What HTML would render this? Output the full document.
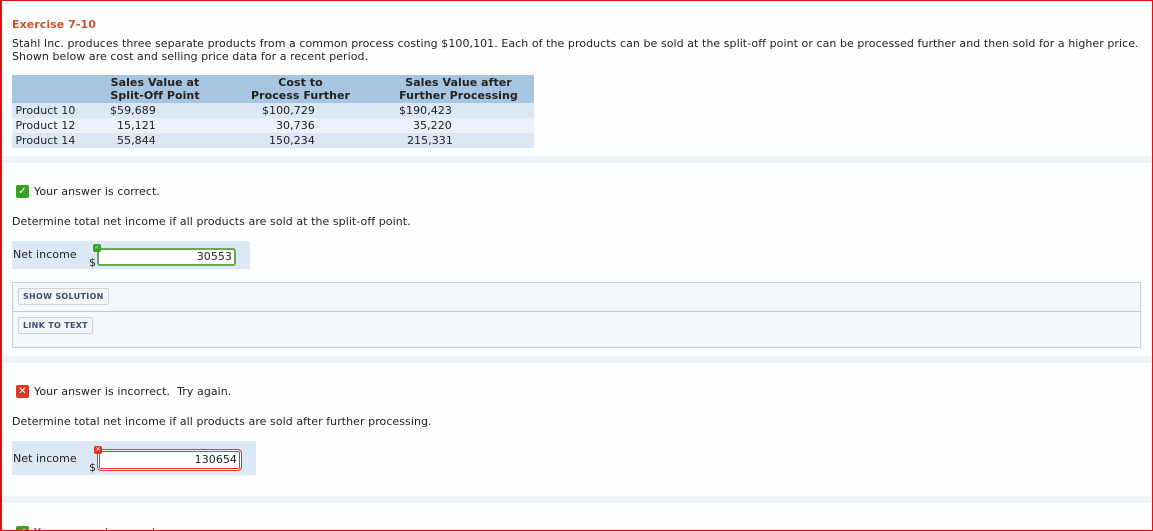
<!DOCTYPE html>
<html><head><meta charset="utf-8"><style>
*{margin:0;padding:0;box-sizing:border-box}
html{width:1153px;height:531px;overflow:hidden}
body{width:1153px;height:531px;overflow:hidden;background:#fdfeff;font-family:"DejaVu Sans","Liberation Sans",sans-serif;font-size:11px;color:#222;position:relative;letter-spacing:.06px}
.a{position:absolute;white-space:nowrap;line-height:13px}
.frame{position:absolute;left:0;top:0;width:1153px;height:531px;border:1px solid #e01010;border-left-width:2px;z-index:9;pointer-events:none}
.sep{position:absolute;left:2px;width:1150px;height:7px;background:#f0f3f7}
table{position:absolute;left:12px;top:75px;width:522px;border-collapse:collapse;font-size:11px}
th{background:#a7c5e0;font-weight:bold;line-height:13px;padding:1px 0;text-align:center;color:#222}
td{line-height:15px;height:15px;padding:0}
.r1{background:#dbe7f5}.r2{background:#eaf1fa}
.chk{position:absolute;width:13px;height:13px;border-radius:2px;background:#3aa024;color:#fff;font-size:10px;line-height:13px;text-align:center;font-weight:bold}
.x{background:#d83a26}
.box{position:absolute;background:#dde8f6}
.btn{position:absolute;height:17px;border:1px solid #cdd3da;border-radius:2px;background:#f3f6f9;color:#3c4f70;font-weight:bold;font-size:8px;line-height:15px;padding:0 4px;letter-spacing:.3px}
</style></head><body>
<div class="frame"></div>
<div class="a" style="left:12px;top:18px;color:#c9522c;font-weight:bold">Exercise 7-10</div>
<div class="a" style="left:12px;top:37px">Stahl Inc. produces three separate products from a common process costing $100,101. Each of the products can be sold at the split-off point or can be processed further and then sold for a higher price.</div>
<div class="a" style="left:12px;top:50px">Shown below are cost and selling price data for a recent period.</div>
<table>
<tr><th style="width:80px"></th><th style="width:126px">Sales Value at<br>Split-Off Point</th><th style="width:165px">Cost to<br>Process Further</th><th>Sales Value after<br>Further Processing</th></tr>
<tr class="r1"><td>&nbsp;Product 10</td><td style="padding-left:18px">$59,689</td><td style="padding-left:44px">$100,729</td><td style="padding-left:16px">$190,423</td></tr>
<tr class="r2"><td>&nbsp;Product 12</td><td style="padding-left:25px">15,121</td><td style="padding-left:58px">30,736</td><td style="padding-left:30px">35,220</td></tr>
<tr class="r1"><td>&nbsp;Product 14</td><td style="padding-left:25px">55,844</td><td style="padding-left:51px">150,234</td><td style="padding-left:24px">215,331</td></tr>
</table>
<div class="sep" style="top:156px"></div>
<div class="chk" style="left:16px;top:185px">✓</div>
<div class="a" style="left:34px;top:185px">Your answer is correct.</div>
<div class="a" style="left:12px;top:215px">Determine total net income if all products are sold at the split-off point.</div>
<div class="box" style="left:12px;top:241px;width:238px;height:28px"></div>
<div class="a" style="left:13px;top:248px">Net income</div>
<div class="a" style="left:89px;top:256px">$</div>
<div style="position:absolute;left:97px;top:248px;width:139px;height:18px;border:2px solid #6aa84f;border-radius:3px;background:#fff;text-align:right;padding-right:2px;line-height:14px">30553</div>
<div class="chk" style="left:93px;top:244px;width:8px;height:8px;font-size:6px;line-height:8px">✓</div>
<div style="position:absolute;left:12px;top:282px;width:1129px;height:66px;border:1px solid #c8ccd2;background:#f5f8fb"></div>
<div style="position:absolute;left:13px;top:311px;width:1127px;height:1px;background:#c8ccd2"></div>
<div class="btn" style="left:18px;top:288px">SHOW SOLUTION</div>
<div class="btn" style="left:18px;top:317px">LINK TO TEXT</div>
<div class="sep" style="top:356px"></div>
<div class="chk x" style="left:16px;top:385px">✕</div>
<div class="a" style="left:34px;top:385px">Your answer is incorrect.&nbsp; Try again.</div>
<div class="a" style="left:12px;top:415px">Determine total net income if all products are sold after further processing.</div>
<div class="box" style="left:12px;top:441px;width:244px;height:34px"></div>
<div class="a" style="left:13px;top:452px">Net income</div>
<div class="a" style="left:89px;top:461px">$</div>
<div style="position:absolute;left:97px;top:449px;width:145px;height:22px;border:1px solid #d33;border-radius:4px;background:#fff;padding:1px">
<div style="border:1px solid #d33;border-radius:2px;height:18px;text-align:right;padding-right:2px;line-height:16px">130654</div></div>
<div class="chk x" style="left:94px;top:446px;width:8px;height:8px;font-size:6px;line-height:8px">✕</div>
<div class="sep" style="top:496px"></div>
<div class="chk" style="left:16px;top:526px">✓</div>
<div class="a" style="left:34px;top:526px">Your answer is correct.</div>
</body></html>
